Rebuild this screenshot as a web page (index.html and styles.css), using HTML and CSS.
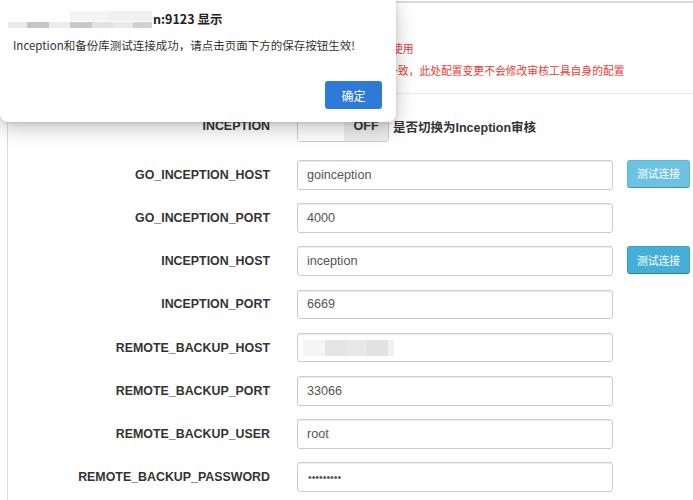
FILE: index.html
```html
<!DOCTYPE html>
<html lang="zh-CN">
<head>
<meta charset="utf-8">
<title>Inception 配置</title>
<link rel="stylesheet" href="styles.css">
</head>
<body>
<div class="page">
  <div class="panel">
    <div class="notes">
      <p class="note note-1">使用</p>
      <p class="note note-2">一致，此处配置变更不会修改审核工具自身的配置</p>
    </div>
    <hr class="sep">
    <div class="form">
      <div class="row row-toggle">
        <label class="lbl">INCEPTION</label>
        <div class="switch"><span class="sw-blank"></span><span class="sw-off">OFF</span></div>
        <span class="sw-text">是否切换为Inception审核</span>
      </div>
      <div class="row">
        <label class="lbl">GO_INCEPTION_HOST</label>
        <input class="inp" type="text" value="goinception">
        <button class="btn btn-a">测试连接</button>
      </div>
      <div class="row">
        <label class="lbl">GO_INCEPTION_PORT</label>
        <input class="inp" type="text" value="4000">
      </div>
      <div class="row">
        <label class="lbl">INCEPTION_HOST</label>
        <input class="inp" type="text" value="inception">
        <button class="btn btn-b">测试连接</button>
      </div>
      <div class="row">
        <label class="lbl">INCEPTION_PORT</label>
        <input class="inp" type="text" value="6669">
      </div>
      <div class="row">
        <label class="lbl">REMOTE_BACKUP_HOST</label>
        <div class="inp inp-masked"><span class="mask"></span></div>
      </div>
      <div class="row">
        <label class="lbl">REMOTE_BACKUP_PORT</label>
        <input class="inp" type="text" value="33066">
      </div>
      <div class="row">
        <label class="lbl">REMOTE_BACKUP_USER</label>
        <input class="inp" type="text" value="root">
      </div>
      <div class="row">
        <label class="lbl">REMOTE_BACKUP_PASSWORD</label>
        <input class="inp inp-pass" type="password" value="123456789">
      </div>
    </div>
  </div>

  <div class="dialog">
    <div class="d-title"><span class="d-blur"></span><span class="d-host">n:9123 显示</span></div>
    <div class="d-msg">Inception和备份库测试连接成功，请点击页面下方的保存按钮生效!</div>
    <div class="d-foot"><button class="d-ok">确定</button></div>
  </div>
</div>
</body>
</html>
```

FILE: styles.css
```css
html, body {
  margin: 0;
  padding: 0;
  background: #ffffff;
}

.page {
  position: relative;
  width: 693px;
  height: 500px;
  overflow: hidden;
  font-family: "Liberation Sans", Arial, "Noto Sans CJK SC", sans-serif;
  color: #333333;
}

.panel {
  margin-left: 7px;
  margin-top: 1px;
  border-top: 2px solid #d9d9d9;
  border-left: 1px solid #dddddd;
  height: 520px;
}

.notes {
  padding-top: 34px;
}

.note {
  margin: 0;
  height: 22px;
  line-height: 22px;
  font-family: "Noto Sans CJK SC", sans-serif;
  font-size: 10.8px;
  color: #ec3b36;
  white-space: nowrap;
}

.note-1 {
  padding-left: 384px;
}

.note-2 {
  padding-left: 379px;
}

.sep {
  margin: 12px 0 0 0;
  border: 0;
  border-top: 1px solid #e9e9e9;
  height: 0;
}

.form {
  padding-top: 16px;
}

.row {
  display: flex;
  align-items: center;
  height: 29.6px;
  margin-bottom: 13.6px;
}

.row-toggle {
  height: 32px;
  margin-bottom: 18px;
}

.lbl {
  width: 262px;
  margin-right: 27px;
  text-align: right;
  font-size: 12.4px;
  font-weight: bold;
  color: #333333;
  white-space: nowrap;
}

.switch {
  display: flex;
  width: 92px;
  height: 32px;
  box-sizing: border-box;
  border: 1px solid #cccccc;
  border-radius: 4px;
  overflow: hidden;
}

.sw-blank {
  width: 46px;
  background: #ffffff;
}

.sw-off {
  flex: 1;
  background: #eeeeee;
  display: flex;
  align-items: center;
  justify-content: center;
  font-size: 12.6px;
  font-weight: bold;
  color: #333333;
}

.sw-text {
  margin-left: 4px;
  font-family: "Liberation Sans", Arial, "Noto Sans CJK SC", sans-serif;
  font-size: 12.5px;
  font-weight: bold;
  color: #333333;
  white-space: nowrap;
}

.inp {
  width: 316px;
  height: 29.6px;
  box-sizing: border-box;
  margin: 0;
  padding: 0 9px;
  border: 1px solid #cccccc;
  border-radius: 3px;
  background: #ffffff;
  box-shadow: inset 0 1px 1px rgba(0, 0, 0, 0.075);
  font-family: "Liberation Sans", Arial, sans-serif;
  font-size: 12.6px;
  color: #555555;
  outline: none;
}

.inp-pass {
  font-size: 10.5px;
  padding-left: 10px;
}

.inp-masked {
  display: flex;
  align-items: center;
  padding: 0 5px;
}

.mask {
  display: block;
  width: 91px;
  height: 16px;
  background: linear-gradient(to right,
    #f5f5f5 0, #f5f5f5 22px,
    #e4e4e4 22px, #e4e4e4 44px,
    #e8e8e8 44px, #e8e8e8 64px,
    #e2e2e2 64px, #e2e2e2 85px,
    #f1f1f1 85px, #f1f1f1 91px);
}

.btn {
  width: 63px;
  height: 27.5px;
  margin-left: 14px;
  align-self: flex-start;
  box-sizing: border-box;
  padding: 0;
  border: 1px solid;
  border-radius: 3px;
  font-family: "Noto Sans CJK SC", sans-serif;
  font-size: 10.8px;
  color: #ffffff;
  line-height: 1;
}

.btn-a {
  background: #6cc3e1;
  border-color: #5db7d7;
  border-bottom-color: #3f93b5;
}

.btn-b {
  background: #46afd8;
  border-color: #3aa0c8;
  border-bottom-color: #2a7ea2;
}

/* alert dialog */
.dialog {
  position: absolute;
  left: 0;
  top: 0;
  width: 396px;
  height: 122px;
  box-sizing: border-box;
  padding: 10px 14px 13px 13px;
  background: #ffffff;
  border-radius: 0 0 8px 8px;
  box-shadow: 0 6px 20px rgba(0, 0, 0, 0.24), 0 1px 4px rgba(0, 0, 0, 0.12);
  font-family: "Noto Sans CJK SC", sans-serif;
}

.d-title {
  display: flex;
  align-items: flex-start;
  height: 18px;
  margin-left: -5px;
}

.d-blur {
  display: block;
  width: 145px;
  height: 17px;
  margin-top: 1px;
  background:
    linear-gradient(to right,
      transparent 0, transparent 62px,
      #f4f4f4 62px, #f4f4f4 100px,
      #f0f0f0 100px, #f0f0f0 144px,
      transparent 144px) top left / 145px 10px no-repeat,
    linear-gradient(to right,
      #e9e9e9 0, #e9e9e9 19px,
      #c6c6c6 19px, #c6c6c6 41px,
      #ececec 41px, #ececec 62px,
      #c9c9c9 62px, #c9c9c9 84px,
      #e1e1e1 84px, #e1e1e1 105px,
      #e9e9e9 105px, #e9e9e9 125px,
      #d1d1d1 125px, #d1d1d1 144px,
      transparent 144px) bottom left / 145px 6px no-repeat;
}

.d-host {
  line-height: 18px;
  font-size: 12.5px;
  font-weight: bold;
  color: #202124;
  white-space: nowrap;
}

.d-msg {
  margin-top: 8px;
  line-height: 18px;
  font-size: 11.5px;
  color: #333333;
  white-space: nowrap;
}

.d-foot {
  display: flex;
  justify-content: flex-end;
  margin-top: 27px;
}

.d-ok {
  width: 57px;
  height: 28px;
  padding: 0;
  border: 0;
  border-radius: 3px;
  background: #2e7bd7;
  color: #ffffff;
  font-family: "Noto Sans CJK SC", sans-serif;
  font-size: 12px;
}
```
